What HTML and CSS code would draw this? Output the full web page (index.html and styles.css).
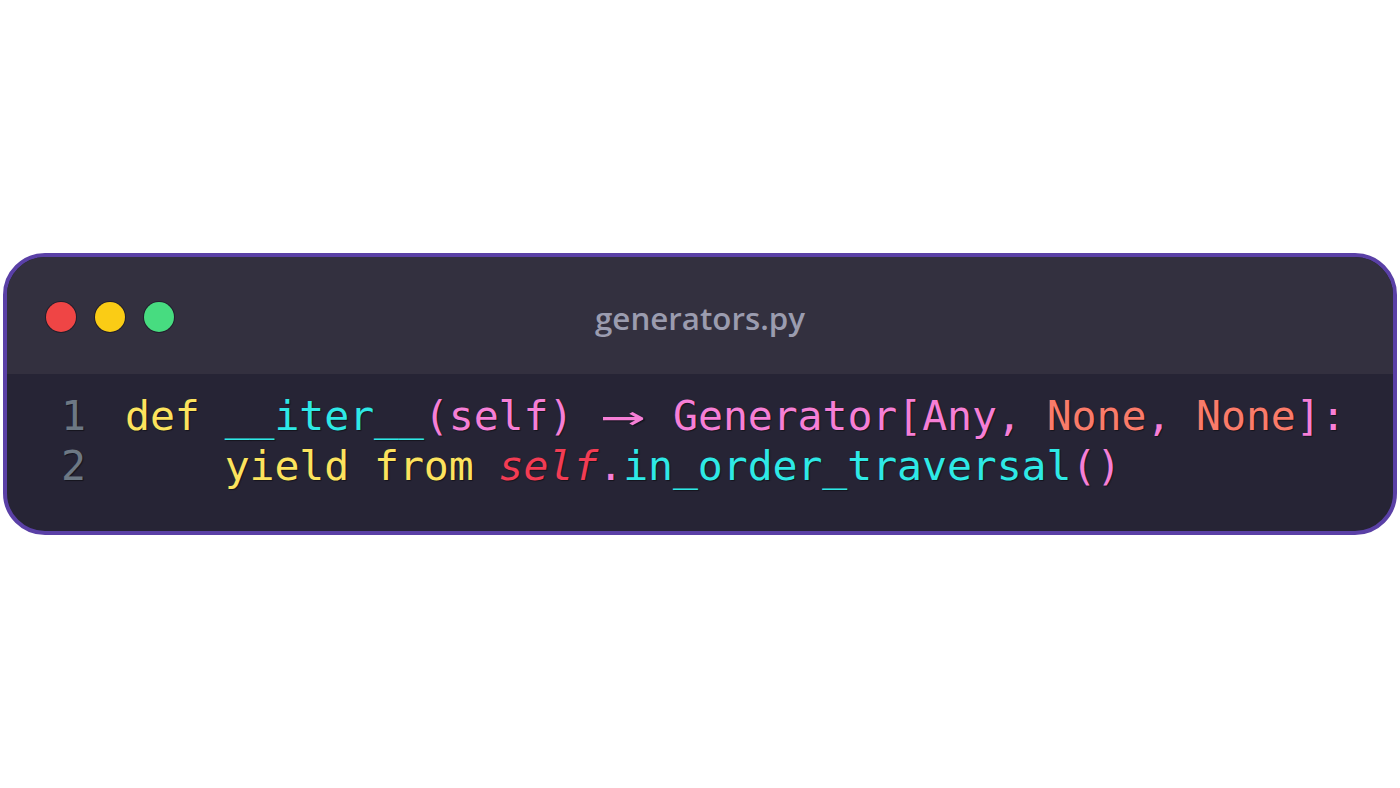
FILE: index.html
```html
<!DOCTYPE html>
<html lang="en">
<head>
<meta charset="utf-8">
<title>generators.py</title>
<link rel="stylesheet" href="styles.css">
</head>
<body>
<div class="window">
  <div class="titlebar">
    <div class="dots">
      <span class="dot red"></span>
      <span class="dot yellow"></span>
      <span class="dot green"></span>
    </div>
    <div class="title">generators.py</div>
  </div>
  <div class="code">
    <div class="line"><span class="ln">1</span><span class="src"><span class="kw">def</span> <span class="fn">__iter__</span><span class="pk">(self)</span> <span class="arrow pk"><span class="arrow-glyph">→</span></span> <span class="pk">Generator[Any,</span> <span class="nn">None</span><span class="pk">,</span> <span class="nn">None</span><span class="pk">]:</span></span></div>
    <div class="line"><span class="ln">2</span><span class="src">    <span class="kw">yield</span> <span class="kw">from</span> <span class="slf">self</span><span class="pk">.</span><span class="fn">in_order_traversal</span><span class="pk">()</span></span></div>
  </div>
</div>
</body>
</html>
```
FILE: styles.css
```css
html, body {
  margin: 0;
  padding: 0;
  background: #ffffff;
}
body {
  height: 788px;
  display: flex;
  align-items: center;
  justify-content: center;
}
.window {
  width: 1386px;
  border: 4px solid #5a40a6;
  border-radius: 42px;
  overflow: hidden;
  background: #262435;
}
.titlebar {
  position: relative;
  height: 117px;
  background: #33303f;
  display: flex;
  align-items: center;
}
.dots {
  display: flex;
  gap: 19px;
  padding-left: 39px;
  padding-top: 2px;
}
.dot {
  width: 30px;
  height: 30px;
  border-radius: 50%;
  box-shadow: 0 0 0 1px rgba(20, 18, 30, 0.55);
}
.red { background: #ef4545; }
.yellow { background: #facc15; }
.green { background: #47dc80; }
.title {
  position: absolute;
  left: 0;
  right: 0;
  top: 0;
  bottom: 0;
  display: flex;
  align-items: center;
  justify-content: center;
  padding-top: 5px;
  font-family: "Open Sans", "Noto Sans", sans-serif;
  font-size: 31.3px;
  font-weight: 600;
  color: #9b9caf;
}
.code {
  padding: 17px 0 40px 54px;
  font-family: "DejaVu Sans Mono", monospace;
  font-size: 41.5px;
  letter-spacing: -0.08px;
  line-height: 50px;
  text-shadow: 1px 1px 1px rgba(0, 0, 0, 0.45);
}
.line {
  display: flex;
  white-space: pre;
}
.ln {
  width: 25px;
  text-align: center;
  color: #6d7884;
  margin-right: 39px;
}
.kw { color: #fce35e; }
.fn { color: #2ee9e6; }
.pk { color: #f67fd6; }
.nn { color: #fa7b6a; }
.slf { color: #f23c54; font-style: italic; }
.arrow {
  display: inline-block;
  width: 2ch;
  text-align: center;
}
.arrow-glyph {
  display: inline-block;
  transform: scaleX(1.8);
}
```
